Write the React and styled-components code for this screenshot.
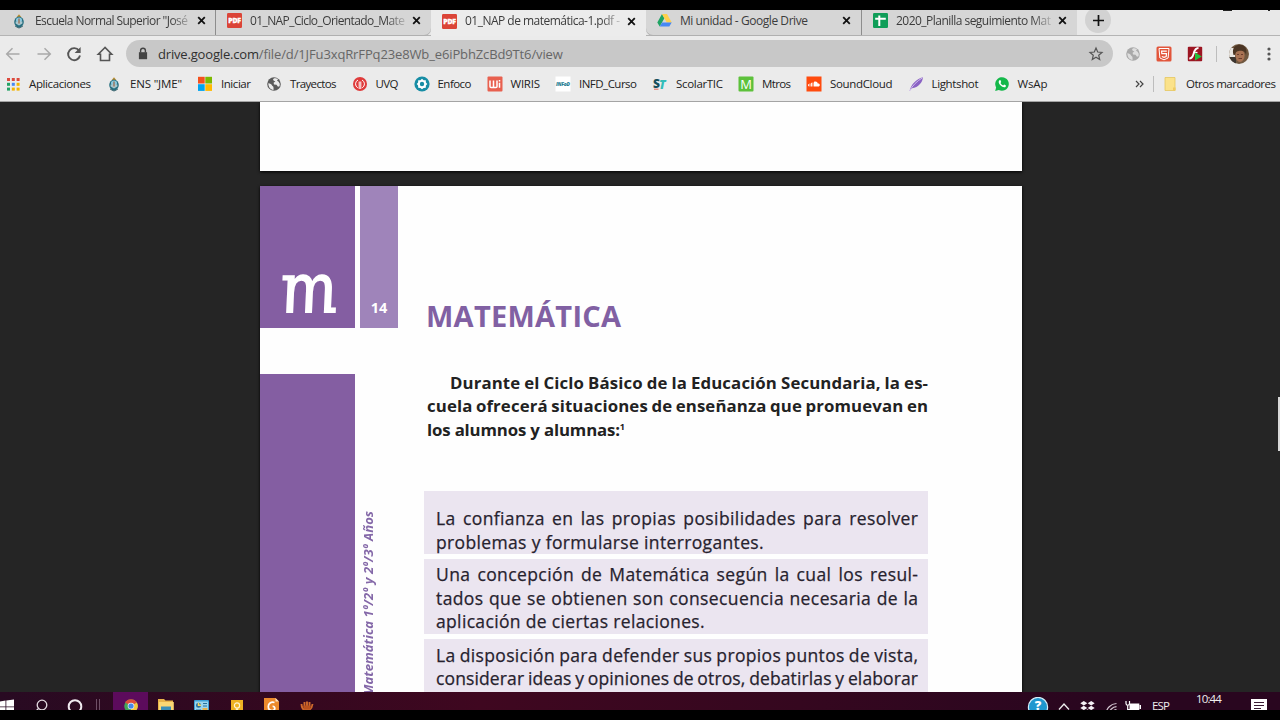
import { useLayoutEffect, useRef } from 'react'
import styled, { createGlobalStyle } from 'styled-components'

const GlobalStyle = createGlobalStyle`
    * {
        box-sizing: border-box;
    }
    body {
        margin: 0;
        overflow: hidden;
        background: #000;
        font-family: 'Open Sans', 'Noto Sans', sans-serif;
    }
`
const ScreenStyled = styled.div`
    width: 1280px;
    height: 720px;
    padding: 10px 0;
    display: flex;
    flex-direction: column;
    background: #000;
    overflow: hidden;
`
const FitStyled = styled.span`
    display: inline-block;
    white-space: pre;
`

// Spreads a run of text over an exact length, by its letters or by its spaces.
const Fit = ({ width, words, tracking = 0, children, ...rest }) => {
    const ref = useRef(null)
    useLayoutEffect(() => {
        const el = ref.current
        el.style.wordSpacing = '0px'
        el.style.letterSpacing = `${tracking}px`
        const box = el.getBoundingClientRect()
        const spare = width - Math.max(box.width, box.height)
        const text = el.textContent
        if (words) {
            el.style.wordSpacing = `${(spare + tracking) / (text.split(' ').length - 1)}px`
        } else {
            el.style.letterSpacing = `${tracking + spare / (text.length - 1)}px`
        }
    }, [width, words, tracking])
    return <FitStyled ref={ref} {...rest}>{children}</FitStyled>
}

/* ---------- tabs ---------- */

const TabStripStyled = styled.div`
    height: 26px;
    flex: none;
    display: flex;
    background: #e8e8e8;
    border-bottom: 1px solid #b4b4b4;
`
const TabStyled = styled.div`
    width: ${p => p.$width}px;
    height: ${p => (p.$active ? 26 : 25)}px;
    flex: none;
    display: flex;
    align-items: center;
    padding: 0 10px 4px 11px;
    background: ${p => (p.$active ? '#ececec' : '#d6d6d6')};
    border-right: ${p => (p.$divider ? '1px solid #8d8d8d' : '0')};
    border-radius: ${p => p.$radius || 0};
    box-shadow: ${p => (p.$radius ? '0 1px 0 0 #b0b0b0' : 'none')};
    svg {
        flex: none;
    }
`
const TabTitleStyled = styled.div`
    width: 155px;
    margin: 0 7px 0 8px;
    flex: none;
    overflow: hidden;
    white-space: nowrap;
    font-size: 12px;
    line-height: 20px;
    color: #3c3c3c;
    mask-image: ${p => (p.$fade ? 'linear-gradient(90deg, #000 136px, transparent 160px)' : 'none')};
`
const NewTabStyled = styled.div`
    width: 26px;
    height: 26px;
    margin: -3px 0 0 8px;
    border-radius: 50%;
    background: #d2d2d2;
    display: flex;
    align-items: center;
    justify-content: center;
    clip-path: inset(3px 0 0 0);
`
const WindowButtonsStyled = styled.div`
    display: flex;
    gap: 36px;
    margin: 0 10px 0 auto;
    height: 1px;
    align-items: stretch;
`
const WindowButtonStyled = styled.div`
    width: ${p => p.$width}px;
    background: #222;
`

/* ---------- toolbar ---------- */

const ToolbarStyled = styled.div`
    height: 35px;
    flex: none;
    display: flex;
    align-items: center;
    background: #ebebeb;
    svg {
        flex: none;
    }
`
const NavStyled = styled.div`
    width: 126px;
    display: flex;
    align-items: center;
    gap: 12.5px;
    padding-left: 4px;
`
const AddressStyled = styled.div`
    width: 987px;
    height: 27px;
    display: flex;
    align-items: center;
    padding: 0 9px 0 10px;
    border-radius: 14px;
    background: #c8c8c8;
    font-size: 13px;
    color: #666;
`
const HostStyled = styled.span`
    color: #303030;
`
const UrlStyled = styled.div`
    flex: 1;
    margin-left: 8px;
    line-height: 20px;
`
const ExtensionsStyled = styled.div`
    flex: 1;
    display: flex;
    align-items: center;
    gap: 15px;
    padding-left: 12px;
`
const ProfileStyled = styled.div`
    display: flex;
    align-items: center;
    gap: 18px;
    margin-left: -2px;
`
const RuleStyled = styled.div`
    width: 1px;
    height: 16px;
    margin: ${p => p.$margin};
    background: #bdbdbd;
`

/* ---------- bookmarks ---------- */

const BookmarksStyled = styled.div`
    height: 31px;
    flex: none;
    display: flex;
    align-items: center;
    padding: 0 4px 5px 5px;
    background: #ebebeb;
    border-bottom: 1px solid #a4a4a4;
`
const BookmarkStyled = styled.div`
    display: flex;
    align-items: center;
    gap: 8px;
    margin-right: ${p => (p.$last ? 0 : 15)}px;
    font-size: 11.5px;
    line-height: 20px;
    color: #222;
    svg {
        flex: none;
    }
`
const BookmarkTextStyled = styled.div`
    width: ${p => p.$width}px;
    white-space: nowrap;
`
const MoreStyled = styled.div`
    margin-left: auto;
    display: flex;
    align-items: center;
`

/* ---------- document ---------- */

const ViewerStyled = styled.div`
    height: 590px;
    flex: none;
    display: flex;
    flex-direction: column;
    align-items: center;
    position: relative;
    overflow: hidden;
    padding-left: 2px;
    background: #252525;
`
const ScrollThumbStyled = styled.div`
    position: absolute;
    right: 0;
    top: 295px;
    width: 2px;
    height: 54px;
    background: #d8d8d8;
`
const PageStyled = styled.div`
    width: 762px;
    height: ${p => p.$height}px;
    flex: none;
    display: flex;
    margin-bottom: 15px;
    background: #fefefe;
    box-shadow: 0 1px 3px #000;
`
const StripeStyled = styled.div`
    width: ${p => p.$width}px;
    margin-right: 5px;
    flex: none;
    display: flex;
    flex-direction: column;
    gap: 46px;
`
const BlockStyled = styled.div`
    height: ${p => p.$height}px;
    display: flex;
    justify-content: center;
    align-items: flex-end;
    background: ${p => p.$color};
`
const LogoStyled = styled.div`
    padding-bottom: 15px;
    font-family: 'DejaVu Serif', serif;
    font-style: italic;
    font-size: 69px;
    line-height: 50px;
    color: #fff;
    -webkit-text-stroke: 1.8px #fff;
    transform: translateX(1.5px) skewX(7deg) scaleX(0.87);
`
const PageNumberStyled = styled.div`
    padding-bottom: 9px;
    font-size: 14.5px;
    line-height: 22px;
    font-weight: 700;
    color: #fff;
`
const SideLabelStyled = styled.div`
    height: 186px;
    margin-top: 136px;
    margin-left: -1.5px;
    width: 18px;
    writing-mode: vertical-rl;
    transform: rotate(180deg);
    font-size: 13px;
    line-height: 18px;
    font-style: italic;
    font-weight: 700;
    color: #8468a8;
`
const BodyStyled = styled.div`
    width: 504px;
    margin-left: 21px;
`
const TitleStyled = styled.h1`
    margin: 0;
    padding: 109px 0 0 2px;
    font-size: 29px;
    line-height: 41px;
    font-weight: 700;
    color: #8160a3;
`
const LeadStyled = styled.div`
    padding: 35px 0 0 3px;
    height: 155px;
    font-size: 16.8px;
    font-weight: 700;
    color: #222;
`
const LineStyled = styled.div`
    height: ${p => p.$height}px;
    line-height: ${p => p.$height}px;
    padding-left: ${p => p.$indent || 0}px;
    white-space: nowrap;
`
const SupStyled = styled.sup`
    font-size: 9px;
    line-height: 0;
    vertical-align: 6px;
`
const ItemStyled = styled.div`
    height: ${p => p.$height}px;
    margin-bottom: 5px;
    padding: ${p => p.$top}px 0 0 12px;
    background: #ebe5f0;
    font-size: 17.5px;
    color: #27222e;
    -webkit-text-stroke: 0.25px #27222e;
`

/* ---------- taskbar ---------- */

const TaskbarStyled = styled.div`
    height: 18px;
    flex: none;
    display: flex;
    align-items: flex-start;
    overflow: hidden;
    background: linear-gradient(90deg, #280a22 0, #35081f 300px, #3f0720 480px, #35071f 800px, #29061f 1100px);
    color: #eee;
    svg {
        flex: none;
    }
`
const TaskStyled = styled.div`
    width: ${p => p.$width}px;
    height: 18px;
    flex: none;
    display: flex;
    justify-content: center;
    padding-top: ${p => p.$top}px;
    overflow: hidden;
    background: ${p => p.$color || 'transparent'};
    font-size: 11.5px;
    line-height: ${p => p.$line || 16}px;
    white-space: nowrap;
`
const SpacerStyled = styled.div`
    flex: 1;
`

/* ---------- icons ---------- */

const Crest = () => (
    <svg width="16" height="16" viewBox="0 0 16 16">
        <path d="M5.5 4.2 8 1.2l2.5 3z" fill="#b98a2c" />
        <ellipse cx="8" cy="9" rx="4.8" ry="5.4" fill="#276f80" />
        <ellipse cx="8" cy="7" rx="3" ry="2.6" fill="#8cc9de" />
        <path d="M4.600 8.400h6.800v2L8 12.600l-3.400-2.200z" fill="#a9c6cd" />
        <path d="M8 5.600v5" stroke="#9d5a35" strokeWidth="1.100" />
        <path d="M4.200 13.200 8 15l3.800-1.800" stroke="#315f6a" fill="none" />
    </svg>
)
const PdfText = styled.text`
    font: 900 7px 'Open Sans', sans-serif;
    letter-spacing: -0.3px;
`
const Pdf = () => (
    <svg width="15" height="15" viewBox="0 0 15 15">
        <rect width="15" height="15" rx="1.2" fill="#db4437" />
        <PdfText x="7.5" y="10" textAnchor="middle" fill="#fff" stroke="#fff" strokeWidth=".3">PDF</PdfText>
    </svg>
)
const Drive = () => (
    <svg width="15" height="15" viewBox="0 0 15 15">
        <path d="M5 1 .3 9.4l2.4 4.2L7.4 5.2z" fill="#1fa463" />
        <path d="M5 1h5l4.700 8.400h-5z" fill="#ffd04b" />
        <path d="M5.100 9.400h9.600l-2.400 4.200H2.700z" fill="#4688f4" />
    </svg>
)
const Sheets = () => (
    <svg width="15" height="15" viewBox="0 0 15 15">
        <rect width="15" height="15" rx="1.2" fill="#0f9d58" />
        <path d="M6.300 2.500v10.500M2.200 5.800h10.600" stroke="#fff" strokeWidth="2" />
    </svg>
)
const Close = () => (
    <svg width="9" height="9" viewBox="0 0 9 9">
        <path d="m1.200 1.200 6.600 6.600m0-6.600L1.200 7.800" stroke="#111" strokeWidth="1.800" />
    </svg>
)
const Apps = () => (
    <svg width="16" height="16" viewBox="0 0 16 16">
        {['#dc4a3d', '#dc4a3d', '#dc4a3d', '#23a366', '#4688f4', '#f4b400', '#23a366', '#f4b400', '#f4b400'].map((c, i) => (
            <rect key={i} x={2 + (i % 3) * 4.8} y={2 + Math.floor(i / 3) * 4.8} width="3" height="3" fill={c} />
        ))}
    </svg>
)
const Windows = () => (
    <svg width="16" height="16" viewBox="0 0 16 16">
        <path d="M1 .8h6.700v6.700H1z" fill="#f4511e" />
        <path d="M8.300.8H15v6.700H8.300z" fill="#7cb900" />
        <path d="M1 8.200h6.700v6.700H1z" fill="#00a4ef" />
        <path d="M8.300 8.200H15v6.700H8.300z" fill="#ffb900" />
    </svg>
)
const Globe = ({ color = '#5b5b5b', land = '#ececec', size = 16 }) => (
    <svg width={size} height={size} viewBox="0 0 16 16">
        <circle cx="8" cy="8" r="6.800" fill={color} />
        <path d="M2.300 7.200c2 .2 3.200.8 3.600 2 .4.9 1.400.9 1.500 1.900.1 1 .3 2 .1 2.800C4.500 13.500 2.300 11 2.300 7.200zM8 2.300c1.300-.2 3 .1 4 1l-1 1.500 1.400.7 1.400 2.200-.2 2.500-1.600.6-1.500-2-2.500-.3-.4-1.800 1.800-1.200-1.600-.8-.8-1.200z" fill={land} />
    </svg>
)
const Uvq = () => (
    <svg width="16" height="16" viewBox="0 0 16 16">
        <circle cx="8" cy="8" r="7" fill="#df3b3b" />
        <path d="M5.800 11.800A4.400 4.400 0 0 1 6 4M10 4a4.400 4.400 0 0 1 .2 7.800M7.200 5.500v7.500M8.800 5.500v7.500" stroke="#fff" strokeWidth="1" fill="none" />
    </svg>
)
const Enfoco = () => (
    <svg width="16" height="16" viewBox="0 0 16 16">
        <circle cx="8" cy="8" r="7.600" fill="#178da5" />
        <path d="m8 2.800 1.600 1.400 2.200.1.100 2.200L13.300 8l-1.400 1.600-.1 2.200-2.200.1L8 13.200l-1.600-1.300-2.200-.1-.1-2.200L2.700 8l1.400-1.500.1-2.200 2.200-.1z" fill="#fff" />
        <circle cx="8" cy="8" r="2.200" fill="#178da5" />
    </svg>
)
const Wiris = () => (
    <svg width="16" height="16" viewBox="0 0 16 16">
        <rect x=".5" y=".5" width="15" height="15" rx="1" fill="#e8604f" />
        <path d="M3 4.500v6q0 1 1 1h5q1 0 1-1v-6M6.500 4.500v7M12.500 6.800v5M12.500 4v1.600" stroke="#fff" strokeWidth="1.500" fill="none" />
    </svg>
)
const InfdText = styled.text`
    font: italic 800 5px 'Open Sans', sans-serif;
`
const Infd = () => (
    <svg width="16" height="16" viewBox="0 0 16 16">
        <rect x=".5" y=".5" width="15" height="15" fill="#fff" />
        <InfdText x="8" y="9.600" textAnchor="middle" textLength="14" fill="#287d92">INFoD</InfdText>
    </svg>
)
const ScolarText = styled.text`
    font: 800 12px 'Open Sans', sans-serif;
    font-style: ${p => (p.$slanted ? 'italic' : 'normal')};
`
const Scolar = () => (
    <svg width="16" height="16" viewBox="0 0 16 16">
        <ScolarText x="1" y="11.500" fill="#174f5c">S</ScolarText>
        <ScolarText x="7" y="12.500" fill="#33bdb8" $slanted>T</ScolarText>
        <path d="M2 13.200h4.500" stroke="#e46a5b" />
    </svg>
)
const MText = styled.text`
    font: 400 13px 'Open Sans', sans-serif;
`
const Mtros = () => (
    <svg width="16" height="16" viewBox="0 0 16 16">
        <rect x=".5" y=".5" width="15" height="15" rx="1" fill="#5dc13b" />
        <MText x="8" y="12.700" textAnchor="middle" fill="#fff">M</MText>
    </svg>
)
const SoundCloud = () => (
    <svg width="16" height="16" viewBox="0 0 16 16">
        <rect x=".5" y=".5" width="15" height="15" fill="#ff4b0e" />
        <path d="M2.500 8.200v2M4 7.500v3M5.500 6.800v3.700M7 6.500v4" stroke="#fff" strokeWidth=".9" />
        <path d="M8 5.800c2-.9 3.600.2 3.800 1.800 1.300-.2 2 .5 2 1.400 0 .9-.6 1.500-1.500 1.500H8z" fill="#fff" />
    </svg>
)
const Feather = () => (
    <svg width="16" height="16" viewBox="0 0 16 16">
        <path d="M1.500 15C3 8.500 8 3 15 1.200 14.600 6 10.500 11.500 4 12.200z" fill="#8a63c4" />
        <path d="M1.500 15C4.500 9.500 9 5 14.500 1.800" stroke="#d6c4ee" strokeWidth=".9" fill="none" />
    </svg>
)
const Whats = () => (
    <svg width="16" height="16" viewBox="0 0 16 16">
        <path d="M1.200 15 2.100 11.400A6.800 6.800 0 1 1 4.800 14z" fill="#14b84a" />
        <path d="M5.500 4.200c-1.500 1-.8 3.400.9 5.100 1.700 1.800 4.400 2.700 5.400 1.100.3-.6.2-1-.2-1.200l-1.500-.7-.9.9C8 9 7 8 6.500 6.900l.7-.9-.6-1.500c-.2-.4-.7-.5-1.100-.3z" fill="#fff" />
    </svg>
)
const Folder = () => (
    <svg width="16" height="16" viewBox="0 0 16 16">
        <path d="M3 1.500h10v13H3z" fill="#fbe28a" stroke="#e5c660" strokeWidth=".8" />
        <path d="M11 11.500h2.600v3H11z" fill="#efcb62" />
    </svg>
)
const Arrow = ({ flip }) => (
    <svg width="18" height="18" viewBox="0 0 18 18" fill="none" stroke="#a9a9a9" strokeWidth="1.500">
        <path d={flip ? 'M2.500 9h12.500M9.500 3.200 15.300 9l-5.800 5.800' : 'M15.500 9H3M8.500 3.200 2.700 9l5.800 5.800'} />
    </svg>
)
const Reload = () => (
    <svg width="18" height="18" viewBox="0 0 18 18">
        <path d="M14 5.600A6 6 0 1 0 15 10.500" fill="none" stroke="#555" strokeWidth="1.900" />
        <path d="M15.600 2v6H9.600z" fill="#555" />
    </svg>
)
const Home = () => (
    <svg width="18" height="18" viewBox="0 0 18 18">
        <path d="M9 2.500 2.300 9.200h2.200v6.300h9V9.200h2.200z" fill="none" stroke="#555" strokeWidth="1.600" />
    </svg>
)
const Lock = () => (
    <svg width="14" height="16" viewBox="0 0 14 16">
        <path d="M2.900 6.200h8.200v7H2.900z" fill="#444" />
        <path d="M4.600 6.500V4.600a2.400 2.400 0 0 1 4.800 0v1.900" fill="none" stroke="#444" strokeWidth="1.400" />
    </svg>
)
const Star = () => (
    <svg width="16" height="16" viewBox="0 0 16 16">
        <path d="m8 2 1.700 4 4.300.4-3.300 2.800 1 4.300L8 11.200l-3.700 2.300 1-4.300L2 6.400 6.300 6z" fill="none" stroke="#555" strokeWidth="1.200" />
    </svg>
)
const Html5 = () => (
    <svg width="16" height="16" viewBox="0 0 16 16">
        <rect x=".5" y=".5" width="15" height="15" rx="1.500" fill="#e2553a" />
        <path d="M3 2.500h10l-.9 9.500L8 13.800 3.900 12z" fill="none" stroke="#fff" />
        <path d="M10.800 5.200H5.600l.2 2.500h4.700l-.3 2.800L8 11.300l-2.200-.8" fill="none" stroke="#fff" strokeWidth="1.200" />
    </svg>
)
const Flash = () => (
    <svg width="16" height="16" viewBox="0 0 16 16">
        <rect x=".8" y=".8" width="14.400" height="14.400" rx="1" fill="#9c1522" />
        <path d="M11.500 2C8 2 7.300 5 6.500 8 5.800 10.500 4.800 12.500 2.300 12.500" fill="none" stroke="#fff" strokeWidth="1.900" />
        <path d="M7 6.500h3.500" stroke="#fff" strokeWidth="1.300" />
        <path d="m8 6.500 6.800 4L8 14.500z" fill="#25c13c" />
    </svg>
)
const AvatarIcon = () => (
    <svg width="20" height="20" viewBox="0 0 20 20">
        <clipPath id="face"><circle cx="10" cy="10" r="10" /></clipPath>
        <g clipPath="url(#face)">
            <path d="M0 0h20v20H0z" fill="#705840" />
            <path d="M0 4h6v9H0z" fill="#e9e6e2" />
            <path d="M0 13h7v7H0z" fill="#3b3530" />
            <ellipse cx="11" cy="11.500" rx="4.600" ry="6.500" fill="#a87253" />
            <path d="M4.500 11C2.500 4 6.500.5 11 .8c5 .2 7.500 4 6 10.200-.5-2.500-2-4-4.500-4.200S6.500 7 5.800 11z" fill="#4b3524" />
            <path d="M8 10.500h2M12 10.500h2M9.500 14.500h3.500" stroke="#6b3d2c" />
        </g>
    </svg>
)
const Dots = () => (
    <svg width="4" height="16" viewBox="0 0 4 16" fill="#555">
        <circle cx="2" cy="3" r="1.600" />
        <circle cx="2" cy="8" r="1.600" />
        <circle cx="2" cy="13" r="1.600" />
    </svg>
)

const StartIcon = () => (
    <svg width="16" height="16" viewBox="0 0 16 16" fill="#fff">
        <path d="M0 2.500 5.500 1.600v5.900H0zM6.300 1.500 14 .4v7.100H6.300zM0 8.300h5.500v6L0 13.500zM6.300 8.300H14v7.300l-7.700-1.100z" />
    </svg>
)
const SearchIcon = () => (
    <svg width="16" height="16" viewBox="0 0 16 16" fill="none" stroke="#e4dce2" strokeWidth="1.300">
        <circle cx="9" cy="6" r="4.800" />
        <path d="M5.500 9.500 1 14" />
    </svg>
)
const Ring = () => (
    <svg width="18" height="18" viewBox="0 0 18 18">
        <circle cx="9" cy="8.500" r="6.300" fill="none" stroke="#f0eaf0" strokeWidth="2" />
    </svg>
)
const Bars = () => (
    <svg width="5" height="14" viewBox="0 0 5 14">
        <path d="M.5 0v14M3.500 0v14" stroke="#6e4f66" />
    </svg>
)
const ChromeIcon = () => (
    <svg width="14" height="14" viewBox="0 0 14 14">
        <circle cx="7" cy="7" r="6.800" fill="#43a557" />
        <path d="M7 7 1.100 3.600A6.800 6.800 0 0 1 12.900 3.600z" fill="#df4b3b" />
        <path d="M7 7 12.900 3.600A6.800 6.800 0 0 1 7 13.800z" fill="#f5c63c" />
        <circle cx="7" cy="7" r="3.300" fill="#e9edf5" />
        <circle cx="7" cy="7" r="2.600" fill="#4587e8" />
    </svg>
)
const Explorer = () => (
    <svg width="16" height="14" viewBox="0 0 16 14">
        <path d="M0 0h6l1.500 1.600H15V14H0z" fill="#e9b44a" />
        <path d="M1 3h14.800v11H1z" fill="#fbd774" />
        <path d="M3 14V7.500h10V14h-3v-3H6v3z" fill="#3c8fb8" />
    </svg>
)
const Panel = () => (
    <svg width="15" height="14" viewBox="0 0 15 14">
        <rect width="15" height="14" rx="1" fill="#3c9fd6" />
        <path d="M1 1.500h13v9H1z" fill="#9bd5ef" />
        <circle cx="4.500" cy="5.200" r="2.500" fill="#2d6f9d" />
        <path d="M4.500 2.700v2.500H7" stroke="#f5d45f" fill="none" strokeWidth="1.500" />
        <path d="M9 3.500h4M9 6h4M2 10h5" stroke="#26709b" />
        <path d="M8.500 8h5v5h-5z" fill="#e7b14b" />
    </svg>
)
const Bulb = () => (
    <svg width="12" height="14" viewBox="0 0 12 14">
        <rect width="12" height="14" fill="#efb223" />
        <circle cx="6" cy="5.500" r="2.600" fill="none" stroke="#fff4cf" strokeWidth="1.200" />
        <path d="M4.800 8.500h2.400v2.500H4.800z" fill="#fff4cf" />
    </svg>
)
const Grooper = () => (
    <svg width="15" height="14" viewBox="0 0 15 14">
        <path d="M0 0h11.500L15 3.500V14H0z" fill="#ec8a2c" />
        <path d="M11.500 0v3.500H15z" fill="#fbe3c6" />
        <path d="M10.500 4.500C7 3.500 4.300 5.500 4.300 8.500c0 2.500 1.700 4 4 4 1.500 0 2.500-1 2.500-2.300C10.800 9 10 8.200 8.600 8.300" fill="none" stroke="#fff" strokeWidth="1.700" />
    </svg>
)
const Hand = () => (
    <svg width="14" height="12" viewBox="0 0 14 12">
        <path d="M1.500 3c0 4 1.500 6 5.500 6s5-2 5.500-6M4.500 1V6M7 .5V6M9.500 1V6" fill="none" stroke="#d06a2c" strokeWidth="1.900" />
        <path d="M3.500 4.500h7v4h-7z" fill="#b9521f" />
    </svg>
)
const HelpText = styled.text`
    font: 800 13px 'Open Sans', sans-serif;
`
const Help = () => (
    <svg width="22" height="20" viewBox="0 0 22 20">
        <circle cx="11" cy="10" r="9.600" fill="#1f97cf" stroke="#d6eef8" strokeWidth="1.200" />
        <HelpText x="11" y="12.800" textAnchor="middle" fill="#fff">?</HelpText>
    </svg>
)
const Caret = () => (
    <svg width="12" height="9" viewBox="0 0 12 9">
        <path d="M1 7.500 6 2l5 5.500" fill="none" stroke="#eee" strokeWidth="1.300" />
    </svg>
)
const Dropbox = () => (
    <svg width="15" height="13" viewBox="0 0 15 13" fill="#f5f0f5">
        <path d="M3.800 0 7.300 2.200 3.800 4.400.3 2.200zM11.200 0l3.500 2.200-3.500 2.200-3.500-2.200zM3.800 4.700l3.500 2.200-3.500 2.200L.3 6.900zM11.200 4.700l3.500 2.200-3.500 2.200-3.500-2.200zM7.500 8.300l3 2-3 2-3-2z" />
    </svg>
)
const Wifi = () => (
    <svg width="13" height="13" viewBox="0 0 13 13" fill="none" stroke="#d5c8d2" strokeWidth="1.200">
        <path d="M1 12A11 11 0 0 1 11.500 1.500M4 12a8 8 0 0 1 7.500-7.300M7 12a5 5 0 0 1 4.500-4.300" />
    </svg>
)
const Battery = () => (
    <svg width="17" height="13" viewBox="0 0 17 13">
        <path d="M4.500 3.500h9.800v7H4.500z" fill="#fff" />
        <path d="M14.500 5h1.500v4h-1.500z" fill="#fff" />
        <path d="M1 1v2.500a1.500 1.500 0 0 0 3.500 0V1M2.700 5v4.500h3" fill="none" stroke="#fff" strokeWidth="1.200" />
    </svg>
)
const Notes = () => (
    <svg width="16" height="16" viewBox="0 0 16 16">
        <path d="M0 0h16v13h-5l-3 3v-3H0z" fill="#fff" />
        <path d="M3 3.500h10M3 6.500h10M3 9.500h7" stroke="#3a1932" strokeWidth="1.100" />
    </svg>
)

/* ---------- data ---------- */

const tabs = [
    { title: 'Escuela Normal Superior "José', width: 153, icon: Crest, box: 216, divider: true, fade: true },
    { title: '01_NAP_Ciclo_Orientado_Mate', width: 155, icon: Pdf, box: 215, radius: '0 0 7px 0', fade: true },
    { title: '01_NAP de matemática-1.pdf -', width: 155, icon: Pdf, box: 215, active: true, fade: true },
    { title: 'Mi unidad - Google Drive', width: 128, icon: Drive, box: 216, radius: '0 0 0 7px', divider: true },
    { title: '2020_Planilla seguimiento Mat', width: 155, icon: Sheets, box: 215, fade: true },
]

const bookmarks = [
    ['Aplicaciones', 62, Apps],
    ['ENS "JME"', 52, Crest],
    ['Iniciar', 30, Windows],
    ['Trayectos', 46.5, Globe],
    ['UVQ', 23, Uvq],
    ['Enfoco', 34, Enfoco],
    ['WIRIS', 29.5, Wiris],
    ['INFD_Curso', 58, Infd],
    ['ScolarTIC', 47, Scolar],
    ['Mtros', 29, Mtros],
    ['SoundCloud', 62.5, SoundCloud],
    ['Lightshot', 47, Feather],
    ['WsAp', 30, Whats],
]

const items = [
    {
        height: 63,
        top: 16,
        lines: [
            ['La confianza en las propias posibilidades para resolver', 482],
            ['problemas y formularse interrogantes.', 328],
        ],
    },
    {
        height: 75,
        top: 4,
        lines: [
            ['Una concepción de Matemática según la cual los resul-', 482],
            ['tados que se obtienen son consecuencia necesaria de la', 482],
            ['aplicación de ciertas relaciones.', 269],
        ],
    },
    {
        height: 75,
        top: 5,
        pitch: 23,
        lines: [
            ['La disposición para defender sus propios puntos de vista,', 482, 0.35],
            ['considerar ideas y opiniones de otros, debatirlas y elaborar', 482, 0.12],
        ],
    },
]

const App = () => {
    return (
        <ScreenStyled>
            <GlobalStyle />
            <TabStripStyled>
                {tabs.map(({ title, width, icon: Icon, box, divider, active, radius, fade }) => (
                    <TabStyled key={title} $width={box} $divider={divider} $active={active} $radius={radius}>
                        <Icon />
                        <TabTitleStyled $fade={fade}>
                            <Fit width={width}>{title}</Fit>
                        </TabTitleStyled>
                        <Close />
                    </TabStyled>
                ))}
                <NewTabStyled>
                    <svg width="13" height="13" viewBox="0 0 13 13">
                        <path d="M6.500 1v11M1 6.500h11" stroke="#111" strokeWidth="1.700" />
                    </svg>
                </NewTabStyled>
                <WindowButtonsStyled>
                    <WindowButtonStyled $width={9} />
                    <WindowButtonStyled $width={2} />
                </WindowButtonsStyled>
            </TabStripStyled>
            <ToolbarStyled>
                <NavStyled>
                    <Arrow />
                    <Arrow flip />
                    <Reload />
                    <Home />
                </NavStyled>
                <AddressStyled>
                    <Lock />
                    <UrlStyled>
                        <HostStyled><Fit width={101}>drive.google.com</Fit></HostStyled>
                        <Fit width={304}>/file/d/1JFu3xqRrFPq23e8Wb_e6iPbhZcBd9Tt6/view</Fit>
                    </UrlStyled>
                    <Star />
                </AddressStyled>
                <ExtensionsStyled>
                    <Globe color="#a9a9a9" land="#dedede" />
                    <Html5 />
                    <Flash />
                    <ProfileStyled>
                        <RuleStyled $margin="0 -6px 0 0" />
                        <AvatarIcon />
                        <Dots />
                    </ProfileStyled>
                </ExtensionsStyled>
            </ToolbarStyled>
            <BookmarksStyled>
                {bookmarks.map(([name, width, Icon]) => (
                    <BookmarkStyled key={name}>
                        <Icon />
                        <BookmarkTextStyled $width={width}>
                            <Fit width={width}>{name}</Fit>
                        </BookmarkTextStyled>
                    </BookmarkStyled>
                ))}
                <MoreStyled>
                    <svg width="9" height="8" viewBox="0 0 9 8">
                        <path d="m1 1 3 3-3 3m4-6 3 3-3 3" fill="none" stroke="#444" strokeWidth="1.200" />
                    </svg>
                    <RuleStyled $margin="0 8px 0 9px" />
                    <BookmarkStyled $last>
                        <Folder />
                        <BookmarkTextStyled $width={90}>
                            <Fit width={90}>Otros marcadores</Fit>
                        </BookmarkTextStyled>
                    </BookmarkStyled>
                </MoreStyled>
            </BookmarksStyled>
            <ViewerStyled>
                <PageStyled $height={69} />
                <PageStyled $height={1000}>
                    <StripeStyled $width={95}>
                        <BlockStyled $height={142} $color="#845ea2">
                            <LogoStyled>m</LogoStyled>
                        </BlockStyled>
                        <BlockStyled $height={812} $color="#845ea2" />
                    </StripeStyled>
                    <StripeStyled $width={38}>
                        <BlockStyled $height={142} $color="#9f84ba">
                            <PageNumberStyled>14</PageNumberStyled>
                        </BlockStyled>
                        <SideLabelStyled>
                            <Fit width={185}>Matemática 1º/2º y 2º/3º Años</Fit>
                        </SideLabelStyled>
                    </StripeStyled>
                    <BodyStyled>
                        <TitleStyled><Fit width={195}>MATEMÁTICA</Fit></TitleStyled>
                        <LeadStyled>
                            <LineStyled $height={23.4} $indent={23}>
                                <Fit words tracking={0.12} width={478}>Durante el Ciclo Básico de la Educación Secundaria, la es-</Fit>
                            </LineStyled>
                            <LineStyled $height={23.4}>
                                <Fit words tracking={0.12} width={501}>cuela ofrecerá situaciones de enseñanza que promuevan en</Fit>
                            </LineStyled>
                            <LineStyled $height={23.4}>
                                <Fit width={193}>los alumnos y alumnas:</Fit>
                                <SupStyled>1</SupStyled>
                            </LineStyled>
                        </LeadStyled>
                        {items.map(({ height, top, pitch = 23.7, lines }) => (
                            <ItemStyled key={lines[0][0]} $height={height} $top={top}>
                                {lines.map(([text, width, tracking = 0.4]) => (
                                    <LineStyled key={text} $height={pitch}>
                                        <Fit words={width === 482} tracking={tracking} width={width}>{text}</Fit>
                                    </LineStyled>
                                ))}
                            </ItemStyled>
                        ))}
                    </BodyStyled>
                </PageStyled>
                <ScrollThumbStyled />
            </ViewerStyled>
            <TaskbarStyled>
                <TaskStyled $width={16} $top={7}><StartIcon /></TaskStyled>
                <TaskStyled $width={50} $top={7}><SearchIcon /></TaskStyled>
                <TaskStyled $width={17} $top={6}><Ring /></TaskStyled>
                <TaskStyled $width={30} $top={7}><Bars /></TaskStyled>
                <TaskStyled $width={35} $top={7} $color="#5c0b5c"><ChromeIcon /></TaskStyled>
                <TaskStyled $width={36} $top={7}><Explorer /></TaskStyled>
                <TaskStyled $width={34} $top={8}><Panel /></TaskStyled>
                <TaskStyled $width={37} $top={8}><Bulb /></TaskStyled>
                <TaskStyled $width={33} $top={6}><Grooper /></TaskStyled>
                <TaskStyled $width={38} $top={9}><Hand /></TaskStyled>
                <SpacerStyled />
                <TaskStyled $width={26} $top={5}><Help /></TaskStyled>
                <TaskStyled $width={26} $top={10}><Caret /></TaskStyled>
                <TaskStyled $width={21} $top={9}><Dropbox /></TaskStyled>
                <TaskStyled $width={27} $top={10}><Wifi /></TaskStyled>
                <TaskStyled $width={17} $top={8}><Battery /></TaskStyled>
                <TaskStyled $width={37} $top={6}><Fit width={18}>ESP</Fit></TaskStyled>
                <TaskStyled $width={59} $top={0} $line={14}><Fit width={26}>10:44</Fit></TaskStyled>
                <TaskStyled $width={42} $top={7}><Notes /></TaskStyled>
            </TaskbarStyled>
        </ScreenStyled>
    )
}

export default App
